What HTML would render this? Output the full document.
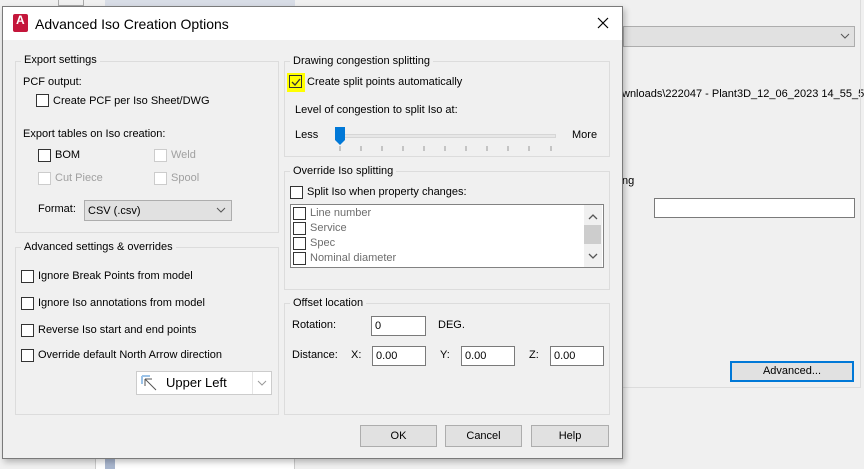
<!DOCTYPE html>
<html><head><style>
*{margin:0;padding:0;box-sizing:border-box}
body{width:864px;height:469px;position:relative;overflow:hidden;background:#f0f0f0;font-family:"Liberation Sans",sans-serif;font-size:11px;color:#000}
.a{position:absolute}
.t{position:absolute;line-height:14px;white-space:nowrap}
.g{color:#a0a0a0}
.cb{position:absolute;width:13px;height:13px;border:1px solid #333;background:#fff}
.cbd{position:absolute;width:13px;height:13px;border:1px solid #ccc;background:#fff}
.gb{position:absolute;border:1px solid #dcdcdc}
.lg{position:absolute;background:#f0f0f0;padding:0 3px;line-height:14px;white-space:nowrap}
.in{position:absolute;background:#fff;border:1px solid #7a7a7a;height:20px;line-height:18px;padding-left:3px}
.btn{position:absolute;background:#e1e1e1;border:1px solid #adadad;text-align:center;line-height:20px;height:22px}
</style></head><body>
<div class="a" style="left:58px;top:0;width:26px;height:6px;border:1px solid #aaa;border-top:none"></div>
<div class="a" style="left:105px;top:0;width:190px;height:6px;background:#d8dde6"></div>
<div class="a" style="left:623px;top:26px;width:232px;height:21px;background:#e1e1e1;border:1px solid #adadad"></div>
<svg class="a" style="left:840px;top:32px" width="10" height="8"><path d="M1 2l4 4 4-4" fill="none" stroke="#555"/></svg>
<div class="t" style="left:622px;top:87px">wnloads\222047 - Plant3D_12_06_2023 14_55_56</div>
<div class="t" style="left:622px;top:174px">ng</div>
<div class="a" style="left:654px;top:198px;width:201px;height:20px;background:#fff;border:1px solid #7a7a7a"></div>
<div class="btn" style="left:730px;top:361px;width:124px;height:21px;border:2px solid #0078d7;line-height:17px">Advanced...</div>
<div class="a" style="left:622px;top:387px;width:238px;height:1px;background:#dcdcdc"></div>
<div class="a" style="left:860px;top:0;width:1px;height:388px;background:#dcdcdc"></div>
<div class="a" style="left:95px;top:458px;width:200px;height:11px;background:#fff;border-left:1px solid #ccc;border-right:1px solid #ccc"></div>
<div class="a" style="left:105px;top:458px;width:10px;height:11px;background:#a9b7cf"></div>

<div class="a" style="left:2px;top:6px;width:621px;height:453px;background:#f0f0f0;border:1px solid #7a7a7a;box-shadow:2px 3px 6px rgba(0,0,0,.25)"></div>
<div class="a" style="left:3px;top:7px;width:619px;height:33px;background:#fff"></div>
<div class="a" style="left:13px;top:14px;width:15px;height:18px;background:#c4163b;border-radius:2px"></div>
<div class="t" style="left:16px;top:13px;color:#fff;font-weight:bold;font-size:12px">A</div>
<div class="t" style="left:35px;top:15px;font-size:14px;line-height:18px">Advanced Iso Creation Options</div>
<svg class="a" style="left:597px;top:17px" width="12" height="12"><path d="M1 1l10 10M11 1L1 11" stroke="#000" stroke-width="1.2"/></svg>

<div class="gb" style="left:15px;top:61px;width:264px;height:172px"></div>
<div class="lg" style="left:21px;top:53px">Export settings</div>
<div class="t" style="left:23px;top:75px">PCF output:</div>
<div class="cb" style="left:36px;top:94px"></div>
<div class="t" style="left:53px;top:94px">Create PCF per Iso Sheet/DWG</div>
<div class="t" style="left:23px;top:127px">Export tables on Iso creation:</div>
<div class="cb" style="left:38px;top:149px"></div>
<div class="t" style="left:55px;top:148px">BOM</div>
<div class="cbd" style="left:154px;top:149px"></div>
<div class="t g" style="left:171px;top:148px">Weld</div>
<div class="cbd" style="left:38px;top:172px"></div>
<div class="t g" style="left:55px;top:171px">Cut Piece</div>
<div class="cbd" style="left:154px;top:172px"></div>
<div class="t g" style="left:171px;top:171px">Spool</div>
<div class="t" style="left:38px;top:202px">Format:</div>
<div class="a" style="left:84px;top:200px;width:148px;height:21px;background:#e1e1e1;border:1px solid #adadad"></div>
<div class="t" style="left:88px;top:204px">CSV (.csv)</div>
<svg class="a" style="left:216px;top:206px" width="10" height="8"><path d="M1 2l4 4 4-4" fill="none" stroke="#555"/></svg>

<div class="gb" style="left:15px;top:247px;width:264px;height:168px"></div>
<div class="lg" style="left:21px;top:240px">Advanced settings &amp; overrides</div>
<div class="cb" style="left:21px;top:270px"></div>
<div class="t" style="left:38px;top:269px">Ignore Break Points from model</div>
<div class="cb" style="left:21px;top:297px"></div>
<div class="t" style="left:38px;top:296px">Ignore Iso annotations from model</div>
<div class="cb" style="left:21px;top:324px"></div>
<div class="t" style="left:38px;top:323px">Reverse Iso start and end points</div>
<div class="cb" style="left:21px;top:349px"></div>
<div class="t" style="left:38px;top:348px">Override default North Arrow direction</div>
<div class="a" style="left:136px;top:371px;width:136px;height:24px;background:#fff;border:1px solid #ccc"></div>
<div class="a" style="left:252px;top:372px;width:1px;height:22px;background:#e5e5e5"></div>
<svg class="a" style="left:140px;top:374px" width="20" height="18"><path d="M2 2h8M2 2v8" stroke="#9cc3e8" stroke-width="2" fill="none"/><path d="M5 5l11 11M5 5v7M5 5h7" stroke="#555" fill="none"/></svg>
<div class="t" style="left:166px;top:376px;font-size:13px">Upper Left</div>
<svg class="a" style="left:257px;top:379px" width="10" height="8"><path d="M1 2l4 4 4-4" fill="none" stroke="#999"/></svg>

<div class="gb" style="left:284px;top:61px;width:326px;height:96px"></div>
<div class="lg" style="left:290px;top:54px">Drawing congestion splitting</div>
<div class="a" style="left:287px;top:73px;width:18px;height:19px;background:#ffff00"></div>
<div class="a" style="left:289px;top:75px;width:13px;height:13px;border:1px solid #333"></div>
<svg class="a" style="left:290px;top:76px" width="12" height="12"><path d="M2 6l3 3 5-6" fill="none" stroke="#333" stroke-width="1.3"/></svg>
<div class="t" style="left:307px;top:75px">Create split points automatically</div>
<div class="t" style="left:295px;top:103px">Level of congestion to split Iso at:</div>
<div class="t" style="left:295px;top:128px">Less</div>
<div class="t" style="left:572px;top:128px">More</div>
<div class="a" style="left:340px;top:134px;width:216px;height:4px;background:#e7e7e7;border:1px solid #d6d6d6"></div>
<svg class="a" style="left:334px;top:126px" width="12" height="20"><path d="M1 1h10v13l-5 5-5-5z" fill="#0078d7"/></svg>
<svg class="a" style="left:338px;top:146px" width="220" height="6"><g stroke="#999"><path d="M2 0v5M23 0v5M44 0v5M65 0v5M86 0v5M107 0v5M128 0v5M149 0v5M170 0v5M191 0v5M213 0v5"/></g></svg>

<div class="gb" style="left:284px;top:171px;width:326px;height:119px"></div>
<div class="lg" style="left:290px;top:164px">Override Iso splitting</div>
<div class="cb" style="left:290px;top:186px"></div>
<div class="t" style="left:307px;top:185px">Split Iso when property changes:</div>
<div class="a" style="left:290px;top:204px;width:314px;height:64px;background:#fff;border:1px solid #828282"></div>
<div class="a" style="left:584px;top:205px;width:18px;height:62px;background:#f0f0f0"></div>
<div class="a" style="left:584px;top:225px;width:17px;height:19px;background:#cdcdcd"></div>
<svg class="a" style="left:588px;top:213px" width="10" height="8"><path d="M1 6l4-4 4 4" fill="none" stroke="#555" stroke-width="1.3"/></svg>
<svg class="a" style="left:588px;top:252px" width="10" height="8"><path d="M1 2l4 4 4-4" fill="none" stroke="#555" stroke-width="1.3"/></svg>
<div class="cb" style="left:293px;top:207px"></div><div class="t" style="left:310px;top:206px;color:#6d6d6d">Line number</div>
<div class="cb" style="left:293px;top:222px"></div><div class="t" style="left:310px;top:221px;color:#6d6d6d">Service</div>
<div class="cb" style="left:293px;top:237px"></div><div class="t" style="left:310px;top:236px;color:#6d6d6d">Spec</div>
<div class="cb" style="left:293px;top:252px"></div><div class="t" style="left:310px;top:251px;color:#6d6d6d">Nominal diameter</div>

<div class="gb" style="left:284px;top:303px;width:326px;height:112px"></div>
<div class="lg" style="left:290px;top:296px">Offset location</div>
<div class="t" style="left:292px;top:318px">Rotation:</div>
<div class="in" style="left:371px;top:316px;width:55px">0</div>
<div class="t" style="left:438px;top:318px">DEG.</div>
<div class="t" style="left:292px;top:348px">Distance:</div>
<div class="t" style="left:351px;top:348px">X:</div>
<div class="in" style="left:372px;top:346px;width:54px">0.00</div>
<div class="t" style="left:440px;top:348px">Y:</div>
<div class="in" style="left:461px;top:346px;width:54px">0.00</div>
<div class="t" style="left:529px;top:348px">Z:</div>
<div class="in" style="left:550px;top:346px;width:54px">0.00</div>

<div class="btn" style="left:360px;top:425px;width:77px">OK</div>
<div class="btn" style="left:445px;top:425px;width:77px">Cancel</div>
<div class="btn" style="left:531px;top:425px;width:78px">Help</div>
</body></html>
